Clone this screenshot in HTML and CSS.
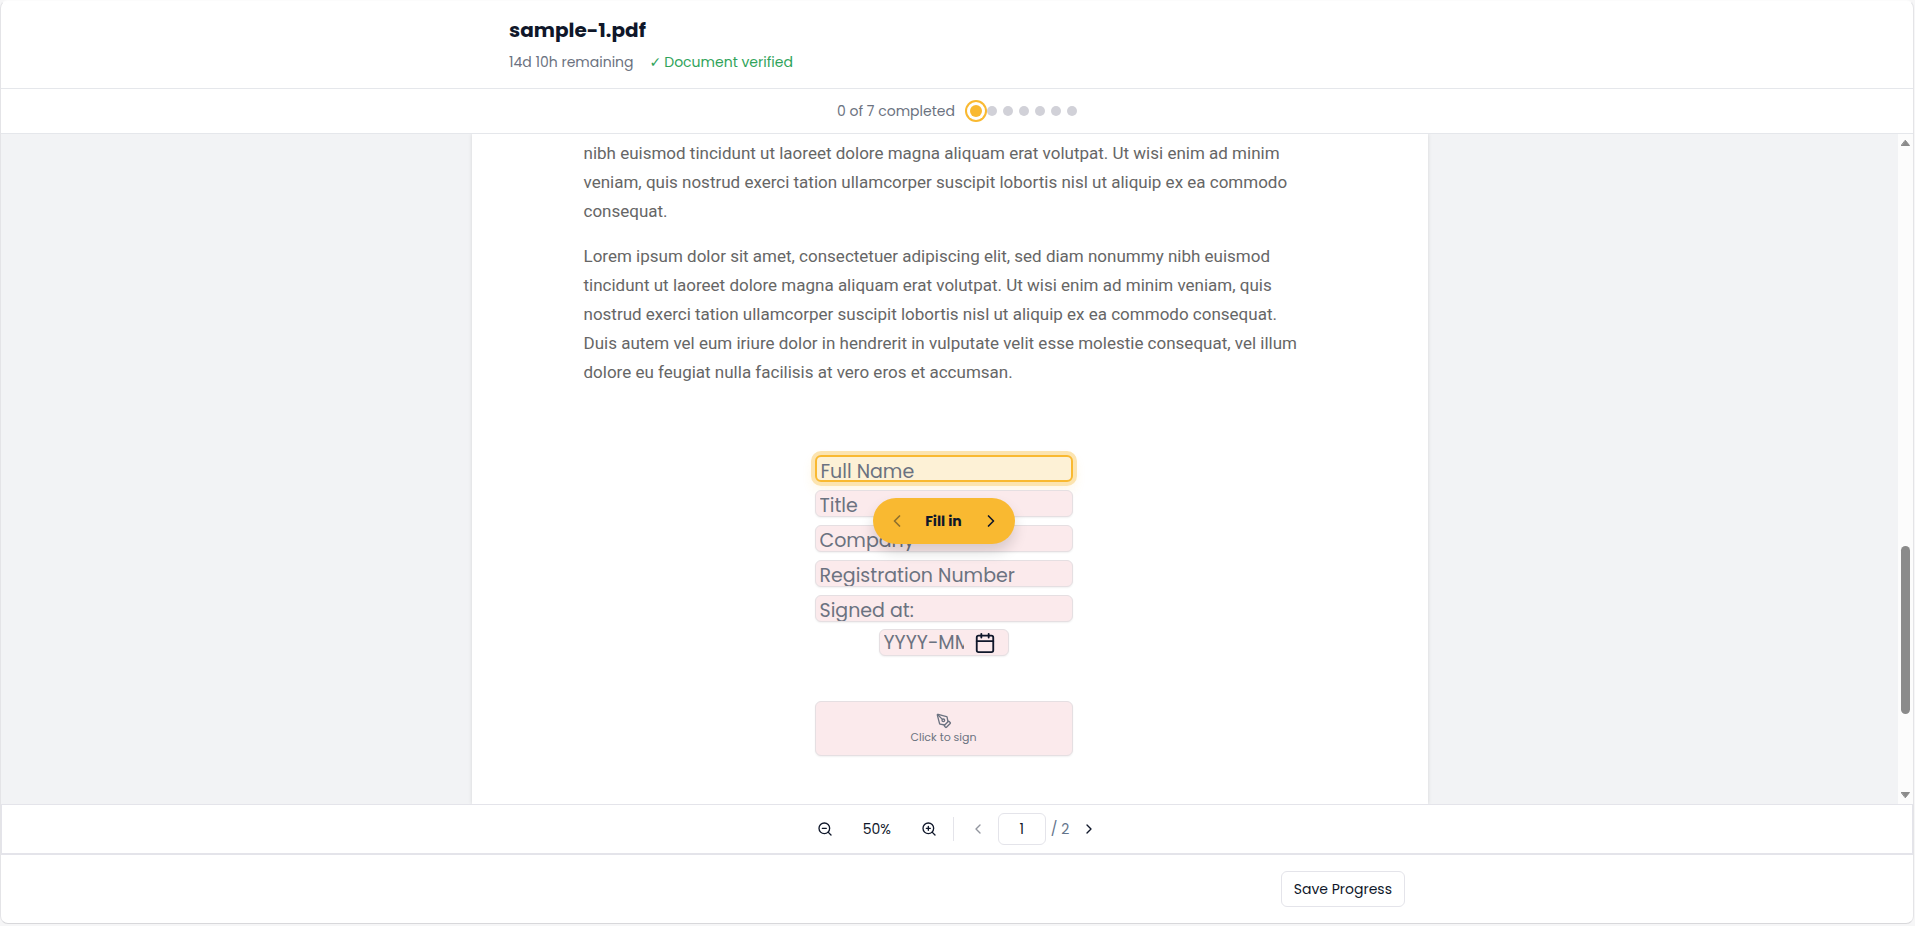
FILE: index.html
```html
<!DOCTYPE html>
<html lang="en">
<head>
<meta charset="utf-8">
<title>sample-1.pdf</title>
<link rel="stylesheet" href="styles.css">
</head>
<body>
<div class="shell">
  <header class="header">
    <div class="container">
      <h1 class="title">sample-1.pdf</h1>
      <div class="meta">
        <span>14d 10h remaining</span>
        <span class="verified"><span class="check">✓</span>Document verified</span>
      </div>
    </div>
  </header>

  <div class="progress">
    <span>0 of 7 completed</span>
    <div class="dots">
      <span class="dot dot-current"></span><span class="dot"></span><span class="dot"></span><span class="dot"></span><span class="dot"></span><span class="dot"></span><span class="dot"></span>
    </div>
  </div>

  <main class="viewer">
    <div class="canvas">
      <article class="page">
        <p>nibh euismod tincidunt ut laoreet dolore magna aliquam erat volutpat. Ut wisi enim ad minim<br>veniam, quis nostrud exerci tation ullamcorper suscipit lobortis nisl ut aliquip ex ea commodo<br>consequat.</p>
        <p>Lorem ipsum dolor sit amet, consectetuer adipiscing elit, sed diam nonummy nibh euismod<br>tincidunt ut laoreet dolore magna aliquam erat volutpat. Ut wisi enim ad minim veniam, quis<br>nostrud exerci tation ullamcorper suscipit lobortis nisl ut aliquip ex ea commodo consequat.<br>Duis autem vel eum iriure dolor in hendrerit in vulputate velit esse molestie consequat, vel illum<br>dolore eu feugiat nulla facilisis at vero eros et accumsan.</p>
        <form class="fields">
          <input class="field field-active" type="text" placeholder="Full Name" aria-label="Full Name">
          <input class="field" type="text" placeholder="Title" aria-label="Title">
          <input class="field" type="text" placeholder="Company" aria-label="Company">
          <input class="field" type="text" placeholder="Registration Number" aria-label="Registration Number">
          <input class="field" type="text" placeholder="Signed at:" aria-label="Signed at:">
          <div class="date">
            <input class="date-input" type="text" placeholder="YYYY-MM-DD" aria-label="Date">
            <button class="date-button" type="button" aria-label="Open calendar">
              <svg width="22" height="22" viewBox="0 0 24 24"><path d="M8 2v4M16 2v4M3 10h18"/><rect x="3" y="4" width="18" height="18" rx="2"/></svg>
            </button>
          </div>
          <button class="sign" type="button">
            <svg width="16" height="16" viewBox="0 0 24 24"><path d="M15.707 21.293a1 1 0 0 1-1.414 0l-1.586-1.586a1 1 0 0 1 0-1.414l5.586-5.586a1 1 0 0 1 1.414 0l1.586 1.586a1 1 0 0 1 0 1.414z"/><path d="m18 13-1.375-6.874a1 1 0 0 0-.746-.776L3.235 2.028a1 1 0 0 0-1.207 1.207L5.35 15.879a1 1 0 0 0 .776.746L13 18"/><path d="m2.3 2.3 7.286 7.286"/><circle cx="11" cy="11" r="2"/></svg>
            <span>Click to sign</span>
          </button>
          <div class="stepper">
            <button class="step" type="button" disabled aria-label="Previous field"><svg width="20" height="20" viewBox="0 0 24 24"><path d="m15 18-6-6 6-6"/></svg></button>
            <button class="step-label" type="button">Fill in</button>
            <button class="step" type="button" aria-label="Next field"><svg width="20" height="20" viewBox="0 0 24 24"><path d="m9 18 6-6-6-6"/></svg></button>
          </div>
        </form>
      </article>
    </div>
    <div class="scrollbar" aria-hidden="true">
      <svg width="9" height="6" viewBox="0 0 9 6"><path d="M4.500 0.500 8.500 5.500H0.500z"/></svg>
      <div class="track"><div class="thumb"></div></div>
      <svg width="9" height="6" viewBox="0 0 9 6"><path d="M4.500 5.500 8.500 0.500H0.500z"/></svg>
    </div>
  </main>

  <div class="toolbar">
    <button class="tool" type="button" aria-label="Zoom out"><svg width="16" height="16" viewBox="0 0 24 24"><circle cx="11" cy="11" r="8"/><path d="m21 21-4.350-4.350M8 11h6"/></svg></button>
    <span class="zoom">50%</span>
    <button class="tool" type="button" aria-label="Zoom in"><svg width="16" height="16" viewBox="0 0 24 24"><circle cx="11" cy="11" r="8"/><path d="m21 21-4.350-4.350M11 8v6M8 11h6"/></svg></button>
    <span class="divider"></span>
    <button class="tool" type="button" disabled aria-label="Previous page"><svg width="16" height="16" viewBox="0 0 24 24"><path d="m15 18-6-6 6-6"/></svg></button>
    <input class="page-number" type="text" value="1" aria-label="Page">
    <span class="total">/ 2</span>
    <button class="tool" type="button" aria-label="Next page"><svg width="16" height="16" viewBox="0 0 24 24"><path d="m9 18 6-6-6-6"/></svg></button>
  </div>

  <footer class="footer">
    <div class="container footer-row">
      <button class="save" type="button">Save Progress</button>
    </div>
  </footer>
</div>
</body>
</html>
```

FILE: styles.css
```css
* { box-sizing: border-box; }

body {
  margin: 0;
  height: 100vh;
  padding: 0 1px 2px 0;
  background: #f6f6f7;
  color: #0f172a;
  font: 14px/20px Poppins, Inter, "Open Sans", sans-serif;
}

button, input { font: inherit; color: inherit; margin: 0; }
button { background: none; border: 0; padding: 0; cursor: pointer; }

svg {
  display: block;
  flex: none;
  fill: none;
  stroke: currentColor;
  stroke-width: 2;
  stroke-linecap: round;
  stroke-linejoin: round;
}

.shell {
  height: 100%;
  display: flex;
  flex-direction: column;
  overflow: hidden;
  background: #fff;
  border: 1px solid #e4e4e7;
  border-top-color: #fcfcfc;
  border-bottom-color: #d8d8db;
  border-radius: 8px;
}

.container { max-width: 896px; margin: 0 auto; }

.header { padding: 15px 0 16px; border-bottom: 1px solid #e5e7eb; }
.title { margin: 0 0 8px; font-size: 20px; line-height: 28px; font-weight: 700; }
.meta { display: flex; gap: 16px; color: #6b7280; }
.verified { display: flex; gap: 3px; color: #2fa35a; }
.check { font-family: "DejaVu Sans", sans-serif; }

.progress {
  height: 45px;
  display: flex;
  align-items: center;
  justify-content: center;
  gap: 16px;
  border-bottom: 1px solid #e5e7eb;
  color: #6b7280;
}
.dots { display: flex; gap: 6px; align-items: center; }
.dot { width: 10px; height: 10px; border-radius: 50%; background: #d1d1d8; }
.dot-current {
  background: #f9b931;
  box-shadow: 0 0 0 1px #f9b931, 0 0 0 4px #fff, 0 0 0 6px #f9b931;
  z-index: 1;
}

.viewer { flex: 1; min-height: 0; display: flex; background: #f2f3f5; }
.canvas { flex: 1; overflow: hidden; }
.page {
  max-width: 956px;
  min-height: 100%;
  margin: 0 auto;
  padding: 5px 112px 0;
  background: #fff;
  box-shadow: 0 0 4px rgba(0, 0, 0, 0.12);
  color: #666;
  font-family: Roboto, sans-serif;
  font-size: 17px;
  line-height: 29px;
}
.page p { margin: 0 0 16px; white-space: nowrap; }

.fields {
  position: relative;
  width: 258px;
  margin: 68px 0 0 231px;
  display: flex;
  flex-direction: column;
  align-items: center;
  gap: 8px;
  color: #6b7280;
  font-family: Poppins, Inter, "Open Sans", sans-serif;
}
.field, .date, .sign {
  width: 100%;
  background: #fbeaec;
  border: 1px solid #e5dfe2;
  border-radius: 6px;
  box-shadow: 0 1px 2px rgba(0, 0, 0, 0.06);
}
.field { height: 27px; padding: 3px 4px 0; font-size: 19px; line-height: 24px; outline: 0; }
.field::placeholder, .date-input::placeholder { color: #6b7280; opacity: 1; }
.field-active {
  padding: 5px 4px 0;
  background: #fdf1d6;
  border: 2px solid #f9b931;
  box-shadow: 0 0 0 4px #fce4b0, 0 6px 12px 2px rgba(249, 185, 49, 0.12);
}
.date {
  width: 130px;
  height: 27px;
  margin-top: -1px;
  display: flex;
  align-items: center;
  padding-left: 4px;
}
.date-input { width: 80px; height: 25px; padding: 0; border: 0; outline: 0; background: none; font-size: 19px; }
.date-button { margin-left: 10px; color: #0f172a; }
.sign {
  height: 55px;
  margin-top: 37px;
  display: flex;
  flex-direction: column;
  align-items: center;
  justify-content: center;
  font-size: 11px;
  line-height: 16px;
}

.stepper {
  position: absolute;
  top: 43px;
  left: 50%;
  transform: translateX(-50%);
  height: 46px;
  padding: 0 16px;
  display: flex;
  align-items: center;
  gap: 8px;
  background: #f9b931;
  border-radius: 23px;
  box-shadow: 0 8px 14px rgba(0, 0, 0, 0.14);
  color: #0f172a;
}
.step { width: 16px; display: flex; justify-content: center; }
.step:disabled, .tool:disabled { opacity: 0.45; }
.step-label { width: 62px; font-size: 14px; line-height: 20px; font-weight: 700; white-space: nowrap; }

.scrollbar {
  width: 15px;
  display: flex;
  flex-direction: column;
  align-items: center;
  padding: 6px 0;
  gap: 6px;
  background: #fcfcfc;
}
.scrollbar svg { fill: #8b8b8b; stroke: #8b8b8b; stroke-width: 1; }
.track { flex: 1; width: 9px; display: flex; flex-direction: column; }
.track::before { content: ""; flex: 395; }
.track::after { content: ""; flex: 72; }
.thumb { flex: 168; border-radius: 5px; background: #8b8b8b; }

.toolbar {
  height: 50px;
  display: flex;
  align-items: center;
  justify-content: center;
  border: 1px solid #e4e4ea;
}
.tool { width: 32px; height: 32px; display: flex; align-items: center; justify-content: center; }
.zoom { width: 72px; text-align: center; }
.divider { width: 1px; height: 24px; margin: 0 8px; background: #e4e4ea; }
.page-number {
  width: 48px;
  height: 32px;
  margin: 0 5px 0 4px;
  padding: 0;
  text-align: center;
  border: 1px solid #e4e4ea;
  border-radius: 6px;
  background: #fff;
}
.total { color: #64748b; margin-right: 4px; }

.footer { padding: 16px 0; border-top: 1px solid #e4e4ea; }
.footer-row { display: flex; justify-content: flex-end; }
.save {
  height: 36px;
  padding: 0 12px;
  border: 1px solid #e4e4ea;
  border-radius: 6px;
  background: #fff;
}
```
